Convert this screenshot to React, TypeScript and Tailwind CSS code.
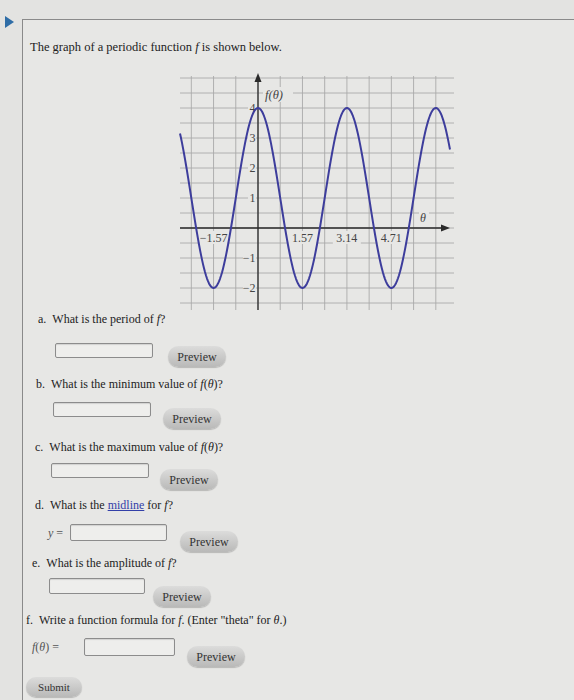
import React from "react";

const serif = { fontFamily: '"Liberation Serif", "DejaVu Serif", serif' };

function Graph() {
  const W = 278;
  const H = 242;
  const x0 = 80;
  const y0 = 158;
  const sx = 28.3;
  const sy = 30;
  const vlines: number[] = [];
  for (let k = -3; k <= 8; k++) vlines.push(x0 + k * sx * (Math.PI / 4));
  const hlines: number[] = [];
  for (let k = -10; k <= 5; k++) hlines.push(y0 + k * 15);
  const pts: string[] = [];
  for (let px = 2; px <= 272; px += 1) {
    const t = (px - x0) / sx;
    const v = 3 * Math.cos(2 * t) + 1;
    pts.push(`${px},${(y0 - v * sy).toFixed(2)}`);
  }
  const bg = "#e7e7e5";
  const yl = [
    { v: 4, t: "4" },
    { v: 3, t: "3" },
    { v: 2, t: "2" },
    { v: 1, t: "1" },
    { v: -1, t: "−1" },
    { v: -2, t: "−2" },
  ];
  const xl = [
    { v: -1.57, t: "−1.57" },
    { v: 1.57, t: "1.57" },
    { v: 3.14, t: "3.14" },
    { v: 4.71, t: "4.71" },
  ];
  return (
    <svg width={W} height={H} viewBox={`0 0 ${W} ${H}`} style={serif}>
      {vlines.map((x, i) => (
        <line key={"v" + i} x1={x} y1={6} x2={x} y2={240} stroke="#a9a9a9" strokeWidth={0.9} />
      ))}
      {hlines.map((y, i) => (
        <line key={"h" + i} x1={2} y1={y} x2={276} y2={y} stroke="#a9a9a9" strokeWidth={0.9} />
      ))}
      <line x1={2} y1={y0} x2={266} y2={y0} stroke="#2a2a2a" strokeWidth={1.3} />
      <polygon points={`272,${y0} 263,${y0 - 3.5} 263,${y0 + 3.5}`} fill="#2a2a2a" />
      <line x1={x0} y1={240} x2={x0} y2={10} stroke="#2a2a2a" strokeWidth={1.3} />
      <polygon points={`${x0},3 ${x0 - 3.5},12 ${x0 + 3.5},12`} fill="#2a2a2a" />
      {yl.map((l) => {
        const y = y0 - l.v * sy;
        const w = l.t.length > 1 ? 13 : 8;
        return (
          <g key={l.t}>
            <rect x={x0 - 2 - w} y={y - 6} width={w} height={12} fill={bg} />
            <text x={x0 - 2.5} y={y + 4} fontSize={12} textAnchor="end" fill="#444">
              {l.t}
            </text>
          </g>
        );
      })}
      {xl.map((l) => {
        const x = x0 + l.v * sx;
        return (
          <g key={l.t}>
            <rect x={x - 14} y={y0 + 3} width={28} height={13} fill={bg} />
            <text x={x} y={y0 + 14} fontSize={12} textAnchor="middle" fill="#444">
              {l.t}
            </text>
          </g>
        );
      })}
      <rect x={x0 + 5} y={17} width={30} height={15} fill={bg} />
      <text x={x0 + 7} y={29} fontSize={12.5} fontStyle="italic" fill="#444">
        f(θ)
      </text>
      <rect x={241} y={142} width={10} height={12} fill={bg} />
      <text x={242} y={152} fontSize={12} fontStyle="italic" fill="#444">
        θ
      </text>
      <polyline points={pts.join(" ")} fill="none" stroke="#3d3d9c" strokeWidth={2} strokeLinejoin="round" />
    </svg>
  );
}

function Input({ w, h }: { w: string; h: string }) {
  return (
    <div
      className={`${w} ${h} shrink-0 rounded-[2px] border border-[#8c8c8c] bg-[#eeeeec] shadow-[inset_0_1px_1px_rgba(0,0,0,0.12)]`}
    />
  );
}

function PreviewBtn({ cls }: { cls: string }) {
  return (
    <div
      className={`${cls} flex h-[21px] w-[58px] shrink-0 items-center justify-center rounded-full bg-gradient-to-b from-[#dcdcdb] to-[#b9b9b8] text-[12px] text-[#333] shadow-[0_1px_1px_rgba(0,0,0,0.2)]`}
      style={serif}
    >
      Preview
    </div>
  );
}

function Q({ cls, label, children }: { cls: string; label: string; children: React.ReactNode }) {
  return (
    <div className={`${cls} flex h-[14px] items-center gap-[6px] text-[12px] leading-[14px] text-[#222]`} style={serif}>
      <span>{label}</span>
      <span>{children}</span>
    </div>
  );
}

export default function App() {
  return (
    <div className="flex h-[700px] w-[574px] overflow-hidden bg-[#e3e3e1]" style={serif}>
      <div className="w-[22px] shrink-0">
        <div className="ml-[5px] mt-[16px] h-0 w-0 border-y-[6px] border-l-[9px] border-y-transparent border-l-[#2f6da6]" />
      </div>
      <div className="mt-[19px] flex flex-1 flex-col border-l border-t border-[#8a8a8a] bg-[#e7e7e5]">
        <div className="ml-[7px] mt-[20px] h-[14px] text-[12.5px] leading-[14px] text-[#222]">
          The graph of a periodic function <i>f</i> is shown below.
        </div>
        <div className="ml-[155px] mt-[16px] h-[242px]">
          <Graph />
        </div>

        <Q cls="ml-[15px] mt-0" label="a.">
          What is the period of <i>f</i>?
        </Q>
        <div className="mt-[17px] flex items-start">
          <div className="ml-[32px]">
            <Input w="w-[98px]" h="h-[15px]" />
          </div>
          <PreviewBtn cls="ml-[15px] mt-[3px]" />
        </div>

        <Q cls="ml-[13px] mt-[10px]" label="b.">
          What is the minimum value of <i>f</i>(<i>θ</i>)?
        </Q>
        <div className="mt-[11px] flex items-start">
          <div className="ml-[30px]">
            <Input w="w-[98px]" h="h-[15px]" />
          </div>
          <PreviewBtn cls="ml-[12px] mt-[6px]" />
        </div>

        <Q cls="ml-[12px] mt-[11px]" label="c.">
          What is the maximum value of <i>f</i>(<i>θ</i>)?
        </Q>
        <div className="mt-[9px] flex items-start">
          <div className="ml-[28px]">
            <Input w="w-[98px]" h="h-[15px]" />
          </div>
          <PreviewBtn cls="ml-[11px] mt-[6px]" />
        </div>

        <Q cls="ml-[12px] mt-[8px]" label="d.">
          What is the{" "}
          <span className="text-[#3340a8] underline">midline</span> for <i>f</i>?
        </Q>
        <div className="mt-[12px] flex items-start">
          <div className="ml-[25px] flex h-[17px] items-center text-[12px] text-[#555]">
            <span className="w-[22px]">
              <i>y</i> =
            </span>
          </div>
          <Input w="w-[97px]" h="h-[17px]" />
          <PreviewBtn cls="ml-[13px] mt-[7px]" />
        </div>

        <Q cls="ml-[9px] mt-[4px]" label="e.">
          What is the amplitude of <i>f</i>?
        </Q>
        <div className="mt-[8px] flex items-start">
          <div className="ml-[26px]">
            <Input w="w-[96px]" h="h-[16px]" />
          </div>
          <PreviewBtn cls="ml-[8px] mt-[8px]" />
        </div>

        <Q cls="ml-[3px] mt-[6px]" label="f.">
          Write a function formula for <i>f</i>. (Enter "theta" for <i>θ</i>.)
        </Q>
        <div className="mt-[11px] flex items-start">
          <div className="ml-[9px] flex h-[18px] w-[52px] items-center text-[12px] text-[#555]">
            <span>
              <i>f</i>(<i>θ</i>) =
            </span>
          </div>
          <Input w="w-[91px]" h="h-[18px]" />
          <PreviewBtn cls="ml-[12px] mt-[8px]" />
        </div>

        <div
          className="ml-[3px] mt-[10px] flex h-[20px] w-[56px] items-center justify-center rounded-full bg-gradient-to-b from-[#dcdcdb] to-[#b9b9b8] text-[11px] text-[#333] shadow-[0_1px_1px_rgba(0,0,0,0.2)]"
          style={serif}
        >
          Submit
        </div>
      </div>
    </div>
  );
}
